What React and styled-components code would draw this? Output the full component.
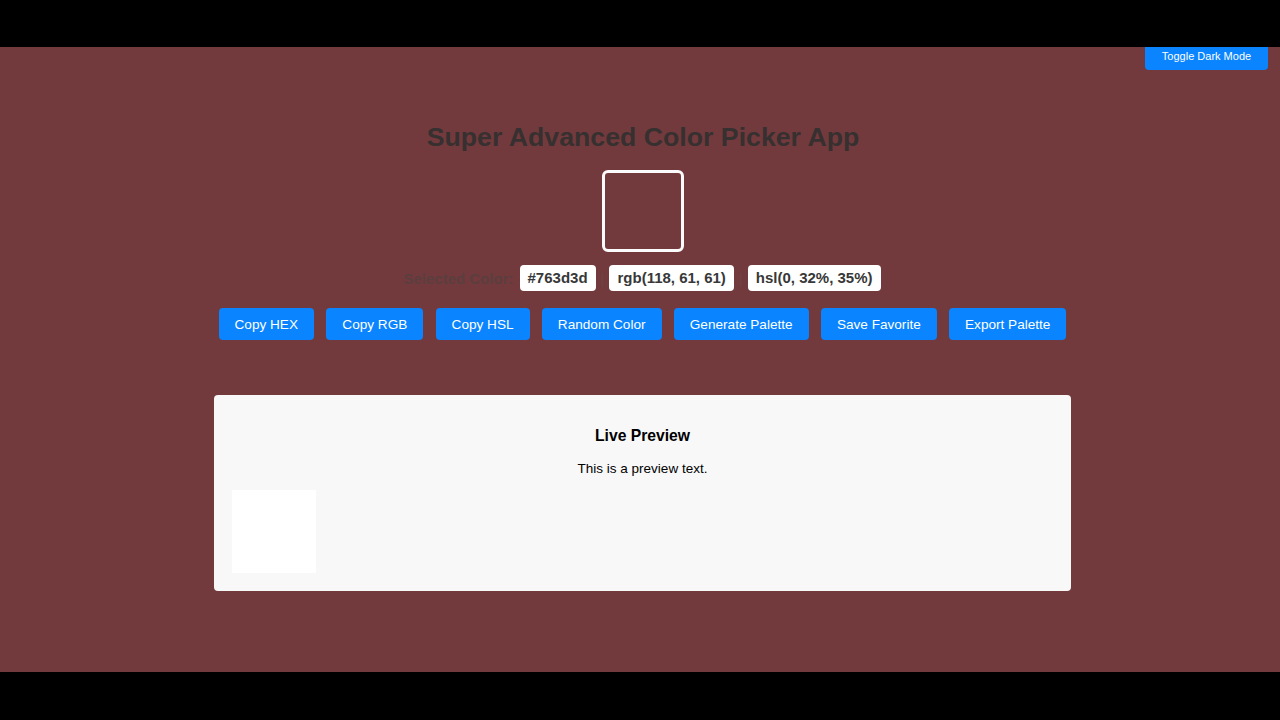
import React from 'react';
import styled, { createGlobalStyle } from 'styled-components';

const GlobalStyle = createGlobalStyle`
  html, body {
    margin: 0;
    padding: 0;
    background: #000;
    font-family: "Liberation Sans", Arial, sans-serif;
  }
`;

const Frame = styled.div`
  width: 1280px;
  height: 720px;
  display: flex;
  flex-direction: column;
  overflow: hidden;
`;

const Letterbox = styled.div`
  height: ${props => props.h}px;
  background: #000;
  flex-shrink: 0;
`;

const Screen = styled.div`
  position: relative;
  flex: 1;
  background: #733a3d;
  overflow: hidden;
  display: flex;
  flex-direction: column;
  align-items: center;
`;

const ToggleButton = styled.button`
  position: absolute;
  top: -7px;
  right: 12px;
  width: 123px;
  height: 30px;
  border: none;
  border-radius: 4px;
  background: #0a84ff;
  color: #fff;
  font-family: "Liberation Sans", Arial, sans-serif;
  font-size: 11px;
  padding: 0;
  padding-top: 2px;
  cursor: pointer;
`;

const Title = styled.h1`
  margin: 75px 0 0;
  font-size: 26.7px;
  line-height: 30px;
  font-weight: bold;
  color: #363030;
  padding-left: 6px;
`;

const Swatch = styled.div`
  margin-top: 18px;
  margin-left: 6px;
  width: 76px;
  height: 76px;
  border: 3px solid #fbfbfb;
  border-radius: 6px;
  background: #733a3d;
`;

const InfoRow = styled.div`
  margin-top: 13px;
  margin-left: 4px;
  height: 26px;
  display: flex;
  align-items: center;
  font-size: 15px;
  font-weight: bold;
`;

const Label = styled.span`
  color: #5b3e3f;
  margin-right: 6px;
`;

const Divider = styled.span`
  color: #6b4446;
  font-weight: normal;
  margin: 0 5px;
`;

const Chip = styled.span`
  background: #fff;
  color: #383838;
  border-radius: 4px;
  height: 26px;
  line-height: 26px;
  padding: 0 8px;
`;

const ButtonRow = styled.div`
  margin-top: 17px;
  margin-left: 5px;
  display: flex;
  gap: 12.3px;
`;

const ActionButton = styled.button`
  height: 32px;
  border: none;
  border-radius: 4px;
  background: #0a84ff;
  color: #fff;
  font-family: "Liberation Sans", Arial, sans-serif;
  font-size: 13.6px;
  padding: 0 16px;
  cursor: pointer;
`;

const PreviewCard = styled.div`
  margin-top: 55px;
  margin-left: 5px;
  width: 857px;
  height: 196px;
  box-sizing: border-box;
  padding: 18px;
  background: #f8f8f8;
  border-radius: 4px;
  display: flex;
  flex-direction: column;
`;

const PreviewHeading = styled.h3`
  margin: 13px 0 0;
  font-size: 15.7px;
  line-height: 20px;
  font-weight: bold;
  text-align: center;
  color: #000;
`;

const PreviewText = styled.p`
  margin: 13px 0 0;
  font-size: 13.5px;
  line-height: 20px;
  text-align: center;
  color: #000;
`;

const PreviewBox = styled.div`
  margin-top: 11px;
  width: 84px;
  height: 84px;
  background: #fff;
`;

const actions = [
  'Copy HEX',
  'Copy RGB',
  'Copy HSL',
  'Random Color',
  'Generate Palette',
  'Save Favorite',
  'Export Palette',
];

export default function App() {
  return (
    <>
      <GlobalStyle />
      <Frame>
        <Letterbox h={47} />
        <Screen>
          <ToggleButton>Toggle Dark Mode</ToggleButton>
          <Title>Super Advanced Color Picker App</Title>
          <Swatch />
          <InfoRow>
            <Label>Selected Color:</Label>
            <Chip>#763d3d</Chip>
            <Divider>|</Divider>
            <Chip>rgb(118, 61, 61)</Chip>
            <Divider>|</Divider>
            <Chip>hsl(0, 32%, 35%)</Chip>
          </InfoRow>
          <ButtonRow>
            {actions.map(label => (
              <ActionButton key={label}>{label}</ActionButton>
            ))}
          </ButtonRow>
          <PreviewCard>
            <PreviewHeading>Live Preview</PreviewHeading>
            <PreviewText>This is a preview text.</PreviewText>
            <PreviewBox />
          </PreviewCard>
        </Screen>
        <Letterbox h={48} />
      </Frame>
    </>
  );
}
